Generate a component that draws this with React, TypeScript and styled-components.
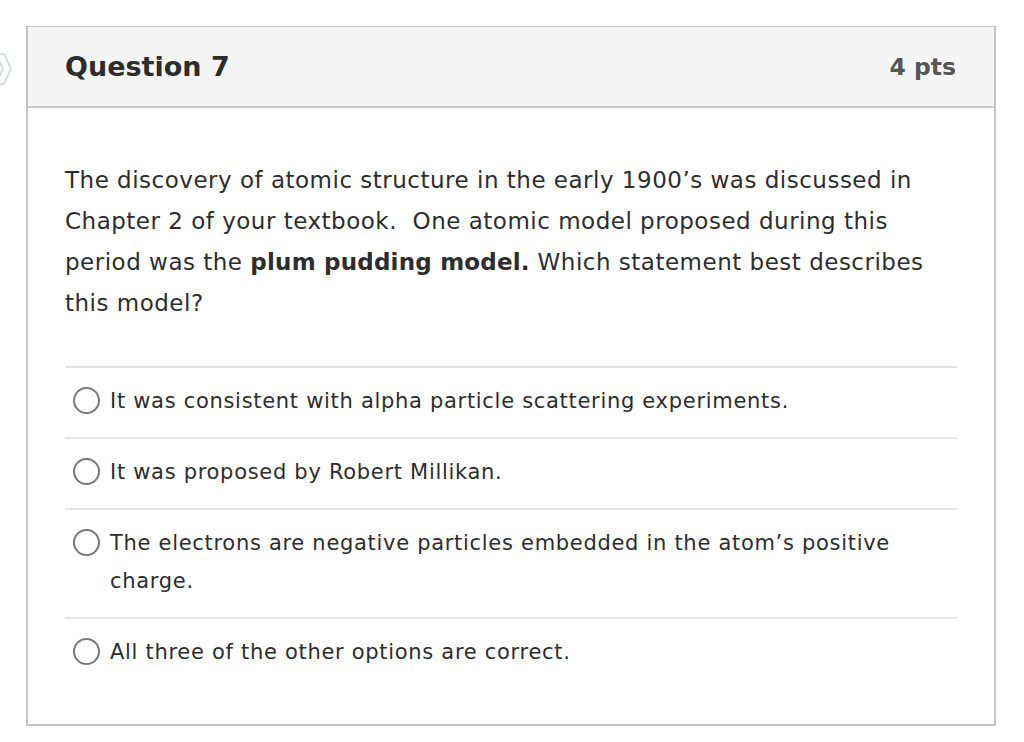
import React from "react";
import styled, { createGlobalStyle } from "styled-components";

const GlobalStyle = createGlobalStyle`
  html, body {
    margin: 0;
    padding: 0;
    background: #ffffff;
  }
  body {
    font-family: "DejaVu Sans", "Open Sans", "Liberation Sans", sans-serif;
    color: #2d2d2d;
  }
`;

const answers = [
  "It was consistent with alpha particle scattering experiments.",
  "It was proposed by Robert Millikan.",
  "The electrons are negative particles embedded in the atom’s positive charge.",
  "All three of the other options are correct.",
];

const App = (): JSX.Element => {
  return (
    <>
      <GlobalStyle />
      <Page>
        <Nav>
          <svg width="12" height="32" viewBox="0 0 12 32">
            <path
              d="M-4 1 L4 1 L11 16 L4 31 L-4 31 L3 16 Z"
              fill="none"
              stroke="#cdd4da"
              strokeWidth="1.5"
              strokeLinejoin="round"
            />
          </svg>
        </Nav>
        <Card>
          <Header>
            <Title>Question 7</Title>
            <Points>4 pts</Points>
          </Header>
          <Body>
            <Prompt>
              The discovery of atomic structure in the early 1900’s was discussed in
              Chapter 2 of your textbook.&nbsp; One atomic model proposed during this
              period was the <strong>plum pudding model.</strong> Which statement best
              describes this model?
            </Prompt>
            <Answers>
              {answers.map((text, i) => (
                <Answer key={i} last={i === answers.length - 1}>
                  <Radio type="radio" name="q7" />
                  <AnswerText>{text}</AnswerText>
                </Answer>
              ))}
            </Answers>
          </Body>
        </Card>
      </Page>
    </>
  );
};

export default App;

const Page = styled.div`
  display: flex;
  align-items: flex-start;
  padding: 26px 28px 0 0;
`;
const Nav = styled.div`
  width: 26px;
  flex: 0 0 26px;
  padding-top: 27px;
  display: flex;
`;
const Card = styled.div`
  flex: 1;
  border: 2px solid #c4c4c4;
  border-top-width: 1px;
  height: 700px;
  box-sizing: border-box;
`;
const Header = styled.div`
  display: flex;
  justify-content: space-between;
  align-items: center;
  height: 81px;
  padding: 0 38px 0 37px;
  background: #f5f5f5;
  border-bottom: 2px solid #c8c8c8;
  box-sizing: border-box;
`;
const Title = styled.h2`
  margin: 0;
  font-size: 27px;
  font-weight: 700;
  color: #2d2d2d;
`;
const Points = styled.div`
  font-size: 23.5px;
  font-weight: 700;
  color: #555555;
`;
const Body = styled.div`
  padding: 52px 37px 0 37px;
`;
const Prompt = styled.p`
  margin: 0 0 42px 0;
  font-size: 23px;
  line-height: 41px;
  letter-spacing: 0.5px;
  color: #2d2d2d;
  strong {
    font-weight: 700;
    letter-spacing: 0.2px;
  }
`;
const Answers = styled.div`
  border-top: 2px solid #e3e3e3;
`;
const Answer = styled.label<{ last?: boolean }>`
  display: flex;
  align-items: flex-start;
  gap: 10px;
  padding: 14px 0 17px 8px;
  border-bottom: ${(props) => (props.last ? "none" : "2px solid #e3e3e3")};
`;
const Radio = styled.input`
  appearance: none;
  margin: 5px 0 0 0;
  width: 27px;
  height: 27px;
  flex: 0 0 27px;
  border-radius: 50%;
  border: 2px solid #777777;
  background: #ffffff;
  box-sizing: border-box;
`;
const AnswerText = styled.span`
  flex: 1;
  font-size: 21px;
  line-height: 38px;
  letter-spacing: 0.7px;
  color: #2d2d2d;
`;
